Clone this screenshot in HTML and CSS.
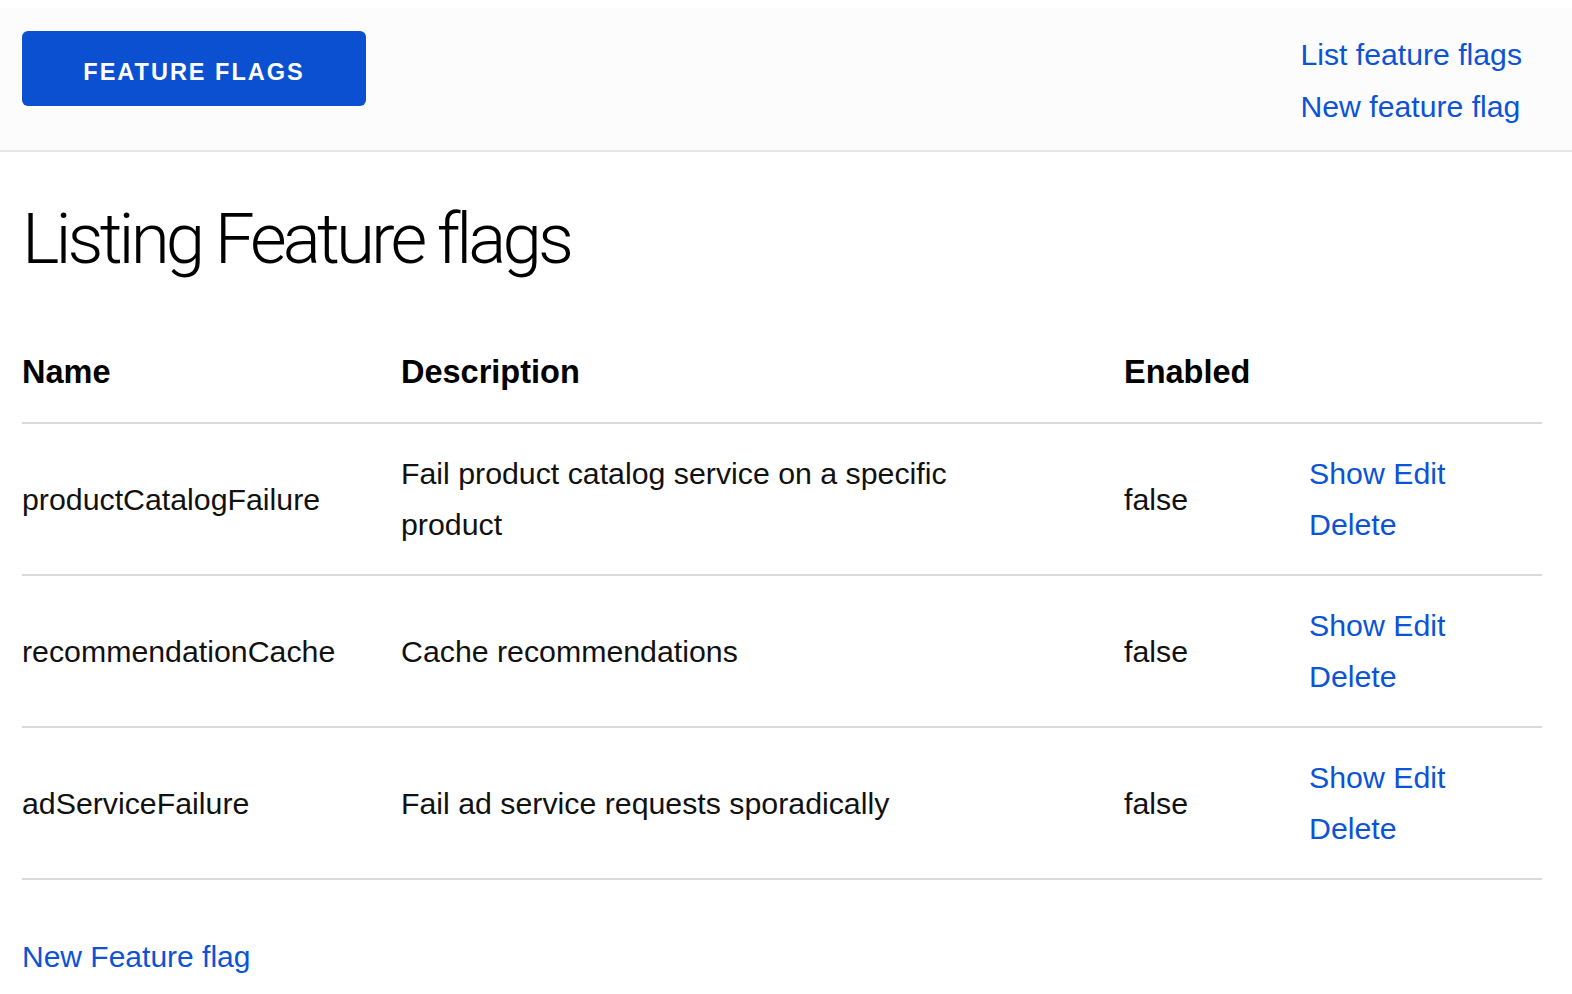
FILE: index.html
```html
<!DOCTYPE html>
<html lang="en">
<head>
<meta charset="utf-8">
<title>Listing Feature flags</title>
<link rel="stylesheet" href="styles.css">
</head>
<body>
<div class="topgap"></div>
<header class="topbar">
  <a class="brand" href="#">FEATURE FLAGS</a>
  <nav class="topnav">
    <a href="#">List feature flags</a>
    <a href="#">New feature flag</a>
  </nav>
</header>
<main class="content">
  <h1 class="title">Listing Feature flags</h1>
  <table class="flags">
    <colgroup>
      <col class="c-name">
      <col class="c-desc">
      <col class="c-enabled">
      <col class="c-actions">
    </colgroup>
    <thead>
      <tr>
        <th>Name</th>
        <th>Description</th>
        <th>Enabled</th>
        <th></th>
      </tr>
    </thead>
    <tbody>
      <tr>
        <td>productCatalogFailure</td>
        <td class="desc">Fail product catalog service on a specific product</td>
        <td>false</td>
        <td class="actions"><a href="#">Show</a> <a href="#">Edit</a> <a href="#">Delete</a></td>
      </tr>
      <tr>
        <td>recommendationCache</td>
        <td class="desc">Cache recommendations</td>
        <td>false</td>
        <td class="actions"><a href="#">Show</a> <a href="#">Edit</a> <a href="#">Delete</a></td>
      </tr>
      <tr>
        <td>adServiceFailure</td>
        <td class="desc">Fail ad service requests sporadically</td>
        <td>false</td>
        <td class="actions"><a href="#">Show</a> <a href="#">Edit</a> <a href="#">Delete</a></td>
      </tr>
    </tbody>
  </table>
  <p class="newlink"><a href="#">New Feature flag</a></p>
</main>
</body>
</html>
```

FILE: styles.css
```css
html, body {
  margin: 0;
  padding: 0;
  background: #ffffff;
}

body {
  font-family: "Liberation Sans", Arial, Helvetica, sans-serif;
  color: #111111;
}

a {
  color: #0c53d6;
  text-decoration: none;
}

.topgap {
  height: 8px;
  background: #ffffff;
}

.topbar {
  display: flex;
  justify-content: space-between;
  align-items: flex-start;
  height: 144px;
  box-sizing: border-box;
  padding: 23px 50px 0 22px;
  background: #fcfcfc;
  border-bottom: 2px solid #e6e6e6;
}

.brand {
  display: flex;
  align-items: center;
  justify-content: center;
  width: 344px;
  height: 75px;
  box-sizing: border-box;
  padding-top: 7px;
  border-radius: 6px;
  background: #0b50d0;
  color: #ffffff;
  font-weight: 700;
  font-size: 23.5px;
  letter-spacing: 2px;
}

.topnav {
  display: flex;
  flex-direction: column;
  align-items: flex-start;
  margin-top: -2px;
  font-size: 30.2px;
  line-height: 51.5px;
}

.content {
  padding: 0 30px 0 22px;
}

.title {
  margin: 47px 0 44px;
  font-family: Roboto, "Liberation Sans", sans-serif;
  font-weight: 300;
  font-size: 71px;
  line-height: 80px;
  letter-spacing: -3.9px;
  color: #000000;
}

.flags {
  width: 1520px;
  border-collapse: collapse;
  table-layout: fixed;
  font-size: 30.3px;
  line-height: 51px;
}

.c-name { width: 379px; }
.c-desc { width: 723px; }
.c-enabled { width: 185px; }
.c-actions { width: 233px; }

.flags th {
  text-align: left;
  font-weight: 700;
  font-size: 32.5px;
  color: #000000;
  padding: 24px 0;
  border-bottom: 2px solid #dadada;
}

.flags td {
  padding: 24px 0;
  vertical-align: middle;
  border-bottom: 2px solid #dadada;
}

.flags td.desc {
  padding-right: 110px;
}

.flags td.actions {
  padding-right: 20px;
}

.newlink {
  margin: 51px 0 0;
  font-size: 30px;
  line-height: 51px;
}
```
